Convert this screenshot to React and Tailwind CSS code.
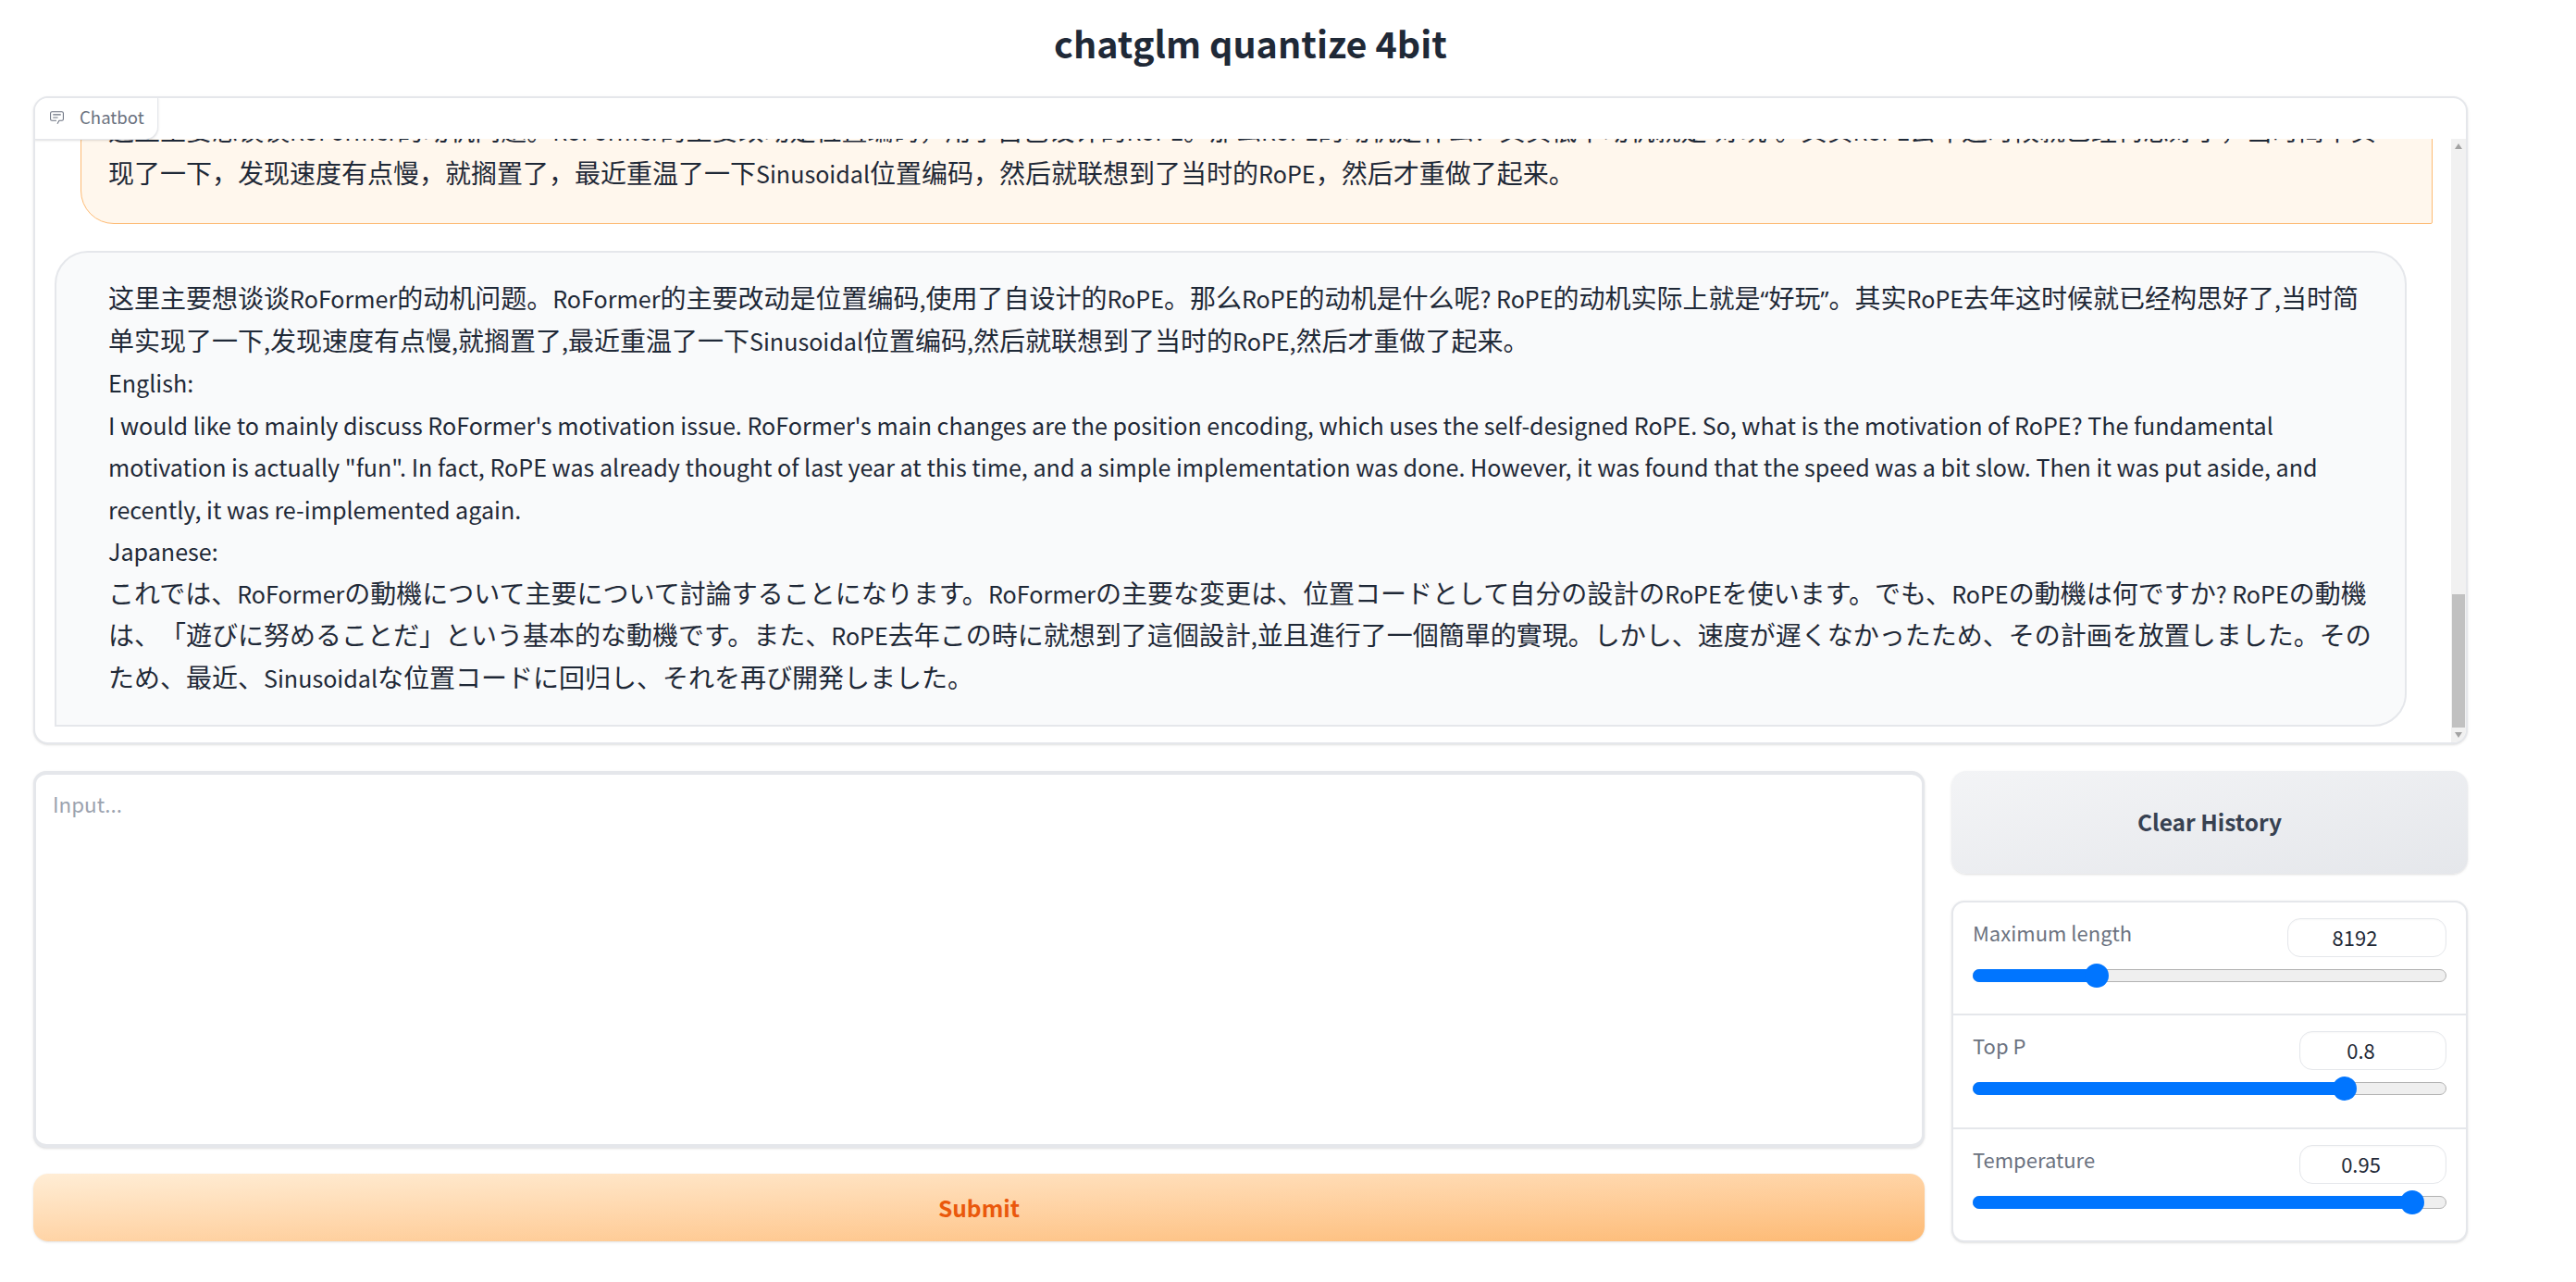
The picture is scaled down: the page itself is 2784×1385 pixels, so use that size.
const sliders = [
  { label: "Maximum length", value: "8192", fill: "w-[134px]", inputW: "w-[172px]", h: "h-[122px]" },
  { label: "Top P", value: "0.8", fill: "w-[402px]", inputW: "w-[159px]", h: "h-[123px]" },
  { label: "Temperature", value: "0.95", fill: "w-[475px]", inputW: "w-[159px]", h: "h-[120px]" },
];

// The reference's Latin glyphs are slightly smaller than the CJK font's own Latin.
function T({ children }) {
  return children.split(/([\x00-\x7F]+|[“”])/).map((run, i) => {
    if (!run) return null;
    if (run === "“" || run === "”") {
      return (
        <span key={i} className="font-['Noto_Sans',sans-serif] text-[25px]">
          {run}
        </span>
      );
    }
    return /^[\x00-\x7F]/.test(run) ? (
      <span key={i} className="text-[25.1px]">
        {run}
      </span>
    ) : (
      <span key={i}>{run}</span>
    );
  });
}

function ChatIcon() {
  return (
    <svg viewBox="0 0 32 32" className="h-[17px] w-[17px] shrink-0 text-[#6b7280]" fill="currentColor">
      <path d="M17.74 30 16 29l4-7h6a2 2 0 0 0 2-2V8a2 2 0 0 0-2-2H6a2 2 0 0 0-2 2v12a2 2 0 0 0 2 2h9v2H6a4 4 0 0 1-4-4V8a4 4 0 0 1 4-4h20a4 4 0 0 1 4 4v12a4 4 0 0 1-4 4h-4.84Z" />
      <path d="M8 10h16v2H8zM8 16h10v2H8z" />
    </svg>
  );
}

function SliderRow({ label, value, fill, inputW, h, last }) {
  return (
    <div className={`flex ${h} flex-col px-[21px] pt-[17px] ${last ? "" : "border-b-2 border-[#e5e7eb]"}`}>
      <div className="flex items-start justify-between">
        <span className="text-[22px] leading-[30px] text-[#6b7280]">{label}</span>
        <div className={`flex h-[42px] ${inputW} items-center justify-center rounded-[14px] border border-[#e5e7eb] pr-[26px] text-[22px] text-[#1f2937] shadow-[inset_0_1px_2px_rgba(0,0,0,0.03)]`}>
          {value}
        </div>
      </div>
      <div className="mt-[13px] h-[14px] w-[512px] rounded-full border border-[#b2b2b2] bg-[#efefef]">
        <div className={`relative -m-px h-[14px] rounded-l-full bg-[#0075ff] ${fill}`}>
          <span className="absolute right-[-13px] top-[-6px] h-[26px] w-[26px] rounded-full bg-[#0075ff]" />
        </div>
      </div>
    </div>
  );
}

const userLines = [
  "这里主要想谈谈RoFormer的动机问题。RoFormer的主要改动是位置编码，用了自己设计的RoPE。那么RoPE的动机是什么？其实低下动机就是“好玩”。其实RoPE去年这时候就已经构思好了，当时简单实",
  "现了一下，发现速度有点慢，就搁置了，最近重温了一下Sinusoidal位置编码，然后就联想到了当时的RoPE，然后才重做了起来。",
];

const botLines = [
  "这里主要想谈谈RoFormer的动机问题。RoFormer的主要改动是位置编码,使用了自设计的RoPE。那么RoPE的动机是什么呢? RoPE的动机实际上就是“好玩”。其实RoPE去年这时候就已经构思好了,当时简",
  "单实现了一下,发现速度有点慢,就搁置了,最近重温了一下Sinusoidal位置编码,然后就联想到了当时的RoPE,然后才重做了起来。",
  "English:",
  "I would like to mainly discuss RoFormer's motivation issue. RoFormer's main changes are the position encoding, which uses the self-designed RoPE. So, what is the motivation of RoPE? The fundamental",
  "motivation is actually \"fun\". In fact, RoPE was already thought of last year at this time, and a simple implementation was done. However, it was found that the speed was a bit slow. Then it was put aside, and",
  "recently, it was re-implemented again.",
  "Japanese:",
  "これでは、RoFormerの動機について主要について討論することになります。RoFormerの主要な変更は、位置コードとして自分の設計のRoPEを使います。でも、RoPEの動機は何ですか? RoPEの動機",
  "は、「遊びに努めることだ」という基本的な動機です。また、RoPE去年この時に就想到了這個設計,並且進行了一個簡單的實現。しかし、速度が遅くなかったため、その計画を放置しました。その",
  "ため、最近、Sinusoidalな位置コードに回归し、それを再び開発しました。",
];

export default function App() {
  return (
    <div className="h-[1385px] w-[2784px] overflow-hidden bg-white pl-[36px] font-['Noto_Sans_CJK_SC',sans-serif] text-[28px] leading-[45.5px] text-[#1f2937] [text-spacing-trim:space-all]">
      <div className="w-[2631px]">
        <h1 className="flex h-[104px] items-center justify-center pb-[12px] text-[39.5px] font-semibold leading-none">chatglm quantize 4bit</h1>

        <section className="relative flex h-[700px] flex-col overflow-hidden rounded-[16px] border-2 border-[#e5e7eb] bg-white shadow-sm">
          <div className="absolute left-[-1px] top-[-1px] z-10 flex h-[46px] w-[134px] items-center gap-[16px] rounded-br-[14px] border-r border-b border-[#e5e7eb] bg-white pb-[2px] pl-[16px] text-[18.6px] leading-none text-[#6b7280] shadow-sm">
            <ChatIcon />
            <span>Chatbot</span>
          </div>

          <div className="mt-[44px] flex min-h-0 flex-1">
            <div className="min-w-0 flex-1 overflow-hidden">
              <div className="ml-[49px] mr-[20px] mt-[-33px] h-[125px] rounded-[36px] rounded-r-[2px] border-[1.5px] border-[#fdba74] bg-[#fff7ed] pl-[29px] whitespace-nowrap">
                {userLines.map((line) => (
                  <div key={line} className="h-[45.5px]">
                    <T>{line}</T>
                  </div>
                ))}
              </div>

              <div className="ml-[21px] mr-[48px] mt-[29px] h-[514px] rounded-[36px] rounded-bl-none border-2 border-[#e5e7eb] bg-[#f9fafb] pl-[56px] pt-[26px] whitespace-nowrap">
                {botLines.map((line) => (
                  <div key={line} className="h-[45.5px]">
                    <T>{line}</T>
                  </div>
                ))}
              </div>
            </div>

            <div className="flex w-[16px] shrink-0 flex-col bg-[#f1f1f1]">
              <div className="flex h-[16px] items-center justify-center">
                <span className="h-0 w-0 border-x-[4px] border-b-[6px] border-x-transparent border-b-[#a3a3a3]" />
              </div>
              <div className="mx-[1px] mt-[476px] h-[145px] bg-[#c1c1c1]" />
              <div className="flex h-[16px] items-center justify-center">
                <span className="h-0 w-0 border-x-[4px] border-t-[6px] border-x-transparent border-t-[#a3a3a3]" />
              </div>
            </div>
          </div>
        </section>

        <div className="mt-[29px] flex gap-[29px]">
          <div className="flex w-[2044px] flex-col gap-[28px]">
            <div className="h-[407px] rounded-[14px] border-y-[4px] border-x-[3px] border-[#e5e7eb] bg-white px-[18px] pt-[14px] text-[22.4px] leading-[34px] text-[#9ca3af] shadow-sm">
              Input...
            </div>
            <button className="h-[73px] rounded-[16px] bg-gradient-to-br from-[#ffedd5] to-[#fdba74] text-[24.5px] font-semibold text-[#ea580c] shadow-sm">
              Submit
            </button>
          </div>

          <div className="flex w-[558px] flex-col gap-[29px]">
            <button className="h-[111px] rounded-[16px] bg-gradient-to-br from-[#f3f4f6] to-[#e5e7eb] pb-[2px] text-[24.5px] font-semibold text-[#374151] shadow-sm">
              Clear History
            </button>
            <div className="rounded-[14px] border-2 border-[#e5e7eb] bg-white shadow-sm">
              {sliders.map((s, i) => (
                <SliderRow key={s.label} {...s} last={i === sliders.length - 1} />
              ))}
            </div>
          </div>
        </div>
      </div>
    </div>
  );
}
